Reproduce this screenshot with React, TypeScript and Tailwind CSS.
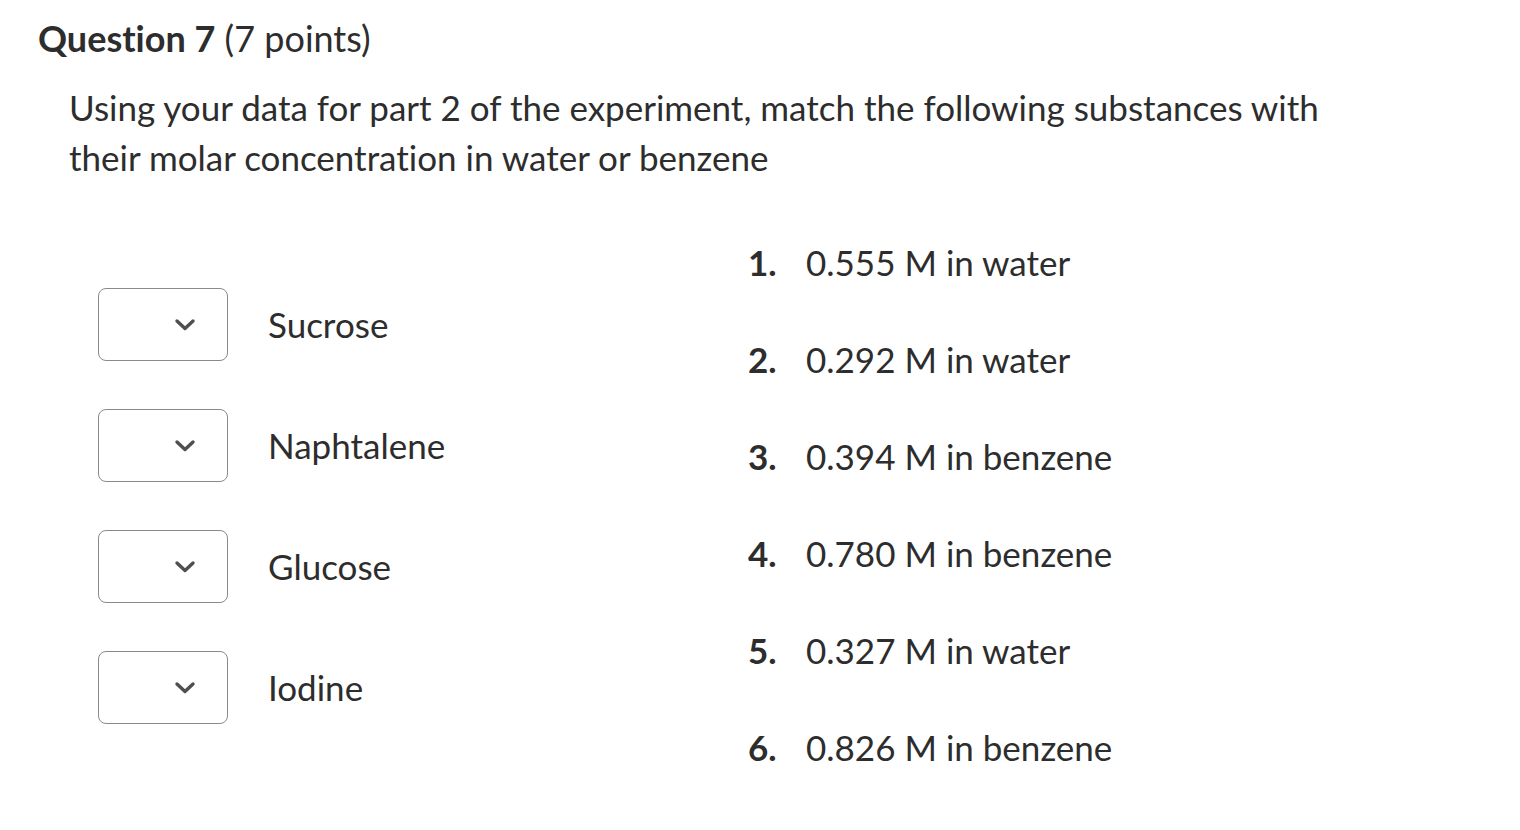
const substances = ["Sucrose", "Naphtalene", "Glucose", "Iodine"];

const answers = [
  "0.555 M in water",
  "0.292 M in water",
  "0.394 M in benzene",
  "0.780 M in benzene",
  "0.327 M in water",
  "0.826 M in benzene",
];

const Chevron = () => (
  <svg width="22" height="13" viewBox="0 0 22 13" fill="none">
    <path d="M3 3 L11 10.5 L19 3" stroke="#4f4f4f" strokeWidth="3.4" strokeLinecap="round" strokeLinejoin="round" />
  </svg>
);

export default function App() {
  return (
    <div className="w-[1520px] h-[830px] bg-white text-[#2d2d2d] overflow-hidden [font-variant-ligatures:none]" style={{ fontFamily: "Lato, 'Open Sans', sans-serif" }}>
      <div className="pl-[38px] pt-[18px]">
        <h2 className="text-[36px] leading-[40px]">
          <span className="font-bold">Question 7</span> <span>(7 points)</span>
        </h2>
      </div>

      <div className="pl-[69px] pt-[24px]">
        <p className="text-[35px] leading-[50px] max-w-[1300px]">
          Using your data for part 2 of the experiment, match the following substances with their molar concentration in water or benzene
        </p>
      </div>

      <div className="flex pt-[32px]">
        {/* left: selects */}
        <div className="flex flex-col gap-[48px] pl-[98px] pt-[74px] w-[748px]">
          {substances.map((s) => (
            <div key={s} className="flex items-center h-[73px]">
              <div className="w-[130px] h-[73px] border border-[#8a8a8a] rounded-[8px] flex items-center justify-end pr-[31px]">
                <Chevron />
              </div>
              <span className="ml-[40px] text-[35px]">{s}</span>
            </div>
          ))}
        </div>

        {/* right: numbered list */}
        <ol className="flex flex-col">
          {answers.map((a, i) => (
            <li key={a} className="flex items-center h-[97px] text-[35px]">
              <span className="font-bold w-[58px]">{i + 1}.</span>
              <span>{a}</span>
            </li>
          ))}
        </ol>
      </div>
    </div>
  );
}
